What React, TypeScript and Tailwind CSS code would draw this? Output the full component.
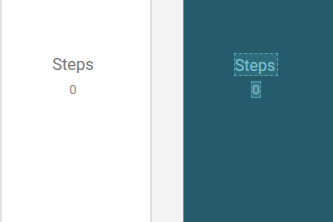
export default function App() {
  const font = { fontFamily: "Roboto, 'Liberation Sans', sans-serif" };
  return (
    <div className="flex h-[222px] w-[333px] overflow-hidden bg-[#f3f3f3]" style={font}>
      <div className="w-[2px] bg-[#e2e2e2]" />
      {/* plain card */}
      <div className="w-[150px] bg-white border-r-2 border-[#dcdcdc]">
        <div className="flex w-[142px] flex-col items-center pt-[53px]">
          <div className="h-[23px] text-[16.5px] leading-[23px] text-[#777777]">Steps</div>
          <div className="mt-[6px] h-[16px] text-[13px] leading-[16px] text-[#888888]">0</div>
        </div>
      </div>
      <div className="w-[31px]" />
      {/* debug card */}
      <div className="flex-1 bg-[#245c6c] border-l border-[#5a9aaa]">
        <div className="flex w-[144px] flex-col items-center pt-[53px]">
          <div className="h-[23px] border border-dashed border-[#5a9ead] bg-[#2e6c7c] pr-[2px] text-[16px] leading-[23px] text-[#80c6d2]">
            Steps
          </div>
          <div className="mt-[5px] h-[17px] border border-dashed border-[#5a9ead] bg-[#377889] text-[13px] leading-[15px] text-[#80c6d2]">
            0
          </div>
        </div>
      </div>
    </div>
  );
}
